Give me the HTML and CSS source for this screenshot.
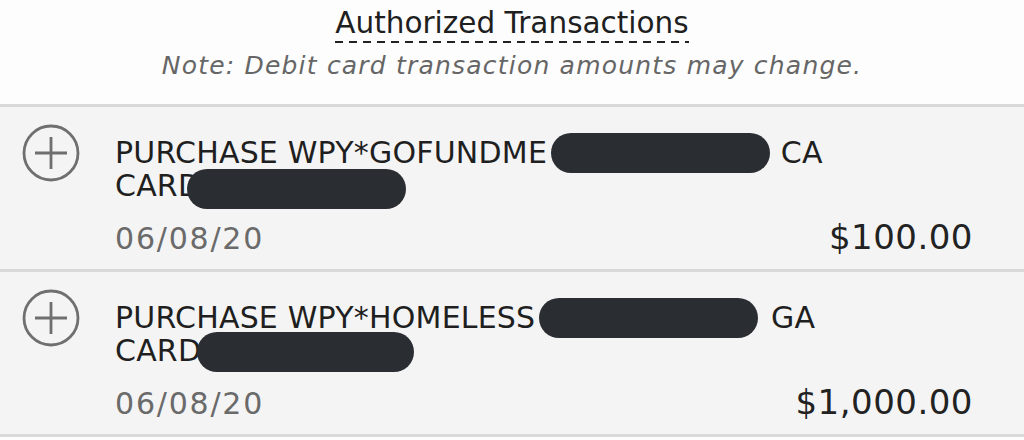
FILE: index.html
```html
<!DOCTYPE html>
<html>
<head>
<meta charset="utf-8">
<link rel="stylesheet" href="styles.css">
</head>
<body>
<header class="head">
  <div class="title"><span class="title-text">Authorized Transactions</span></div>
  <div class="note">Note: Debit card transaction amounts may change.</div>
</header>
<ul class="list">
  <li class="txn">
    <svg class="plus" viewBox="0 0 60 60" width="60" height="60"><circle cx="30" cy="30" r="27"/><path d="M14 30H46M30 14V46"/></svg>
    <div class="body">
      <div class="desc">PURCHASE WPY*GOFUNDME<span class="redact r1a"></span> CA<br>CARD<span class="redact r1b"></span></div>
      <div class="meta"><span class="date">06/08/20</span><span class="amount">$100.00</span></div>
    </div>
  </li>
  <li class="txn">
    <svg class="plus" viewBox="0 0 60 60" width="60" height="60"><circle cx="30" cy="30" r="27"/><path d="M14 30H46M30 14V46"/></svg>
    <div class="body">
      <div class="desc">PURCHASE WPY*HOMELESS<span class="redact r2a"></span> GA<br>CARD<span class="redact r2b"></span></div>
      <div class="meta"><span class="date">06/08/20</span><span class="amount">$1,000.00</span></div>
    </div>
  </li>
</ul>
</body>
</html>
```
FILE: styles.css
```css
* { box-sizing: border-box; }
html, body { margin: 0; padding: 0; }
body {
  background: #fdfdfd;
  font-family: "DejaVu Sans", Verdana, sans-serif;
  color: #1f1f1f;
  width: 1024px;
  height: 440px;
  overflow: hidden;
}
.head {
  padding: 3px 0 23px;
  text-align: center;
  border-bottom: 3px solid #d9d9d9;
  height: 107px;
}
.title {
  font-size: 29.5px;
  line-height: 40px;
  height: 40px;
}
.title-text {
  display: inline-block;
  background-image: repeating-linear-gradient(90deg, #222 0 8px, transparent 8px 14px);
  background-size: 100% 2px;
  background-position: left bottom;
  background-repeat: no-repeat;
}
.note {
  margin-top: 7px;
  font-size: 25px;
  line-height: 32px;
  letter-spacing: 1.2px;
  font-style: italic;
  color: #666;
}
.list { list-style: none; margin: 0; padding: 0; }
.txn {
  display: flex;
  background: #f4f4f4;
  border-bottom: 3px solid #d9d9d9;
  height: 165px;
  padding: 0 51px 0 21px;
}
.plus {
  flex: none;
  margin-top: 16px;
  fill: none;
  stroke: #6f6f6f;
  stroke-width: 2.8;
}
.body {
  flex: 1;
  margin-left: 34px;
  padding-top: 29px;
}
.desc {
  font-size: 30px;
  line-height: 33px;
  letter-spacing: 0.2px;
  white-space: nowrap;
}
.redact {
  display: inline-block;
  width: 219px;
  height: 40px;
  border-radius: 20px;
  background: #2a2e33;
  vertical-align: baseline;
  margin-top: -12px;
  margin-bottom: -11px;
}
.r1a { margin-left: 4px; margin-right: 1px; margin-bottom: -10px; }
.r1b { margin-left: -14px; margin-bottom: -13px; }
.r2a { margin-left: 4px; margin-right: 3px; margin-bottom: -10px; }
.r2b { margin-left: -4px; width: 217px; margin-bottom: -11px; }
.meta {
  display: flex;
  justify-content: space-between;
  align-items: baseline;
  margin-top: 19px;
}
.date {
  font-size: 30px;
  line-height: 33px;
  letter-spacing: 1.8px;
  color: #6a6a6a;
}
.amount {
  font-size: 34px;
  line-height: 33px;
  letter-spacing: 0.5px;
  color: #222;
}
```
